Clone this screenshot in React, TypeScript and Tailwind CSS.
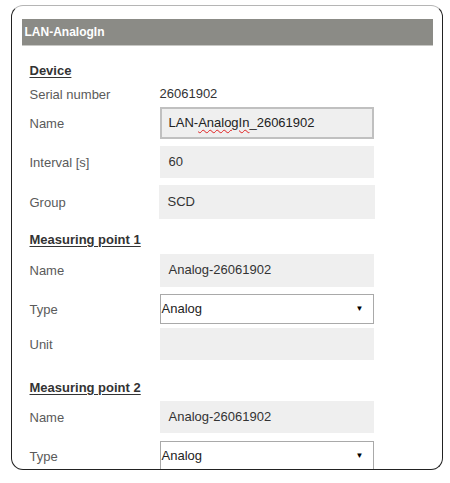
import React from 'react';

const font = { fontFamily: '"Liberation Sans", Arial, sans-serif' };

function Heading({ text, className = '' }: { text: string; className?: string }) {
    return (
        <div className={`h-[20px] flex items-center pl-[8px] text-[13px] font-bold text-[#333] underline underline-offset-2 ${className}`}>
            {text}
        </div>
    );
}

function Row({ label, className = '', children }: { label: string; className?: string; children: React.ReactNode }) {
    return (
        <div className={`flex items-center ${className}`}>
            <div className="w-[138px] pl-[8px] pt-[2px] text-[13px] text-[#5a5a5a]">{label}</div>
            {children}
        </div>
    );
}

function Field({ value, className = '' }: { value: string; className?: string }) {
    return (
        <div className={`w-[214px] h-[32px] bg-[#efefef] flex items-center pl-[9px] text-[13px] text-[#333] ${className}`}>
            {value}
        </div>
    );
}

function Select({ value, className = '' }: { value: string; className?: string }) {
    return (
        <div className={`w-[214px] h-[30px] bg-white border border-[#a9a9a9] flex items-center justify-between pl-[1px] pr-[9px] text-[13px] text-[#222] ${className}`}>
            <span>{value}</span>
            <span className="text-[8px] text-black">▼</span>
        </div>
    );
}

export default function App() {
    return (
        <div className="w-[450px] h-[483px] bg-white pt-[5px] pl-[11px]" style={font}>
            <div className="w-[432px] h-[465px] border-[1.5px] border-[#222] border-t-[#b5b5b5] rounded-[12px] overflow-hidden px-[9.5px] pt-[12.5px]">
                <div className="h-[27px] bg-[#8b8b86] border-b border-[#c8c8c5] flex items-center pl-[3px] text-[12px] font-bold text-white">
                    LAN-AnalogIn
                </div>

                <Heading text="Device" className="mt-[15px]" />
                <Row label="Serial number" className="h-[18px] mt-[4px]">
                    <div className="text-[13px] text-[#333]">26061902</div>
                </Row>
                <Row label="Name" className="mt-[4px]">
                    <div className="w-[214px] h-[32px] bg-[#efefef] border-2 border-[#c0c0c0] flex items-center pl-[7px] text-[13px] text-[#222]">
                        <span>
                            LAN-<span className="underline decoration-wavy decoration-[#e02020] decoration-1 underline-offset-2">AnalogIn</span>_26061902
                        </span>
                    </div>
                </Row>
                <Row label="Interval [s]" className="mt-[7px]">
                    <Field value="60" />
                </Row>
                <Row label="Group" className="mt-[7px]">
                    <Field value="SCD" className="h-[34px] w-[216px] -ml-[1px]" />
                </Row>

                <Heading text="Measuring point 1" className="mt-[11px]" />
                <Row label="Name" className="mt-[4px]">
                    <Field value="Analog-26061902" className="h-[33px]" />
                </Row>
                <Row label="Type" className="mt-[7px]">
                    <Select value="Analog" />
                </Row>
                <Row label="Unit" className="mt-[4px]">
                    <Field value="" />
                </Row>

                <Heading text="Measuring point 2" className="mt-[18px]" />
                <Row label="Name" className="mt-[3px]">
                    <Field value="Analog-26061902" />
                </Row>
                <Row label="Type" className="mt-[8px]">
                    <Select value="Analog" />
                </Row>
            </div>
        </div>
    );
}
